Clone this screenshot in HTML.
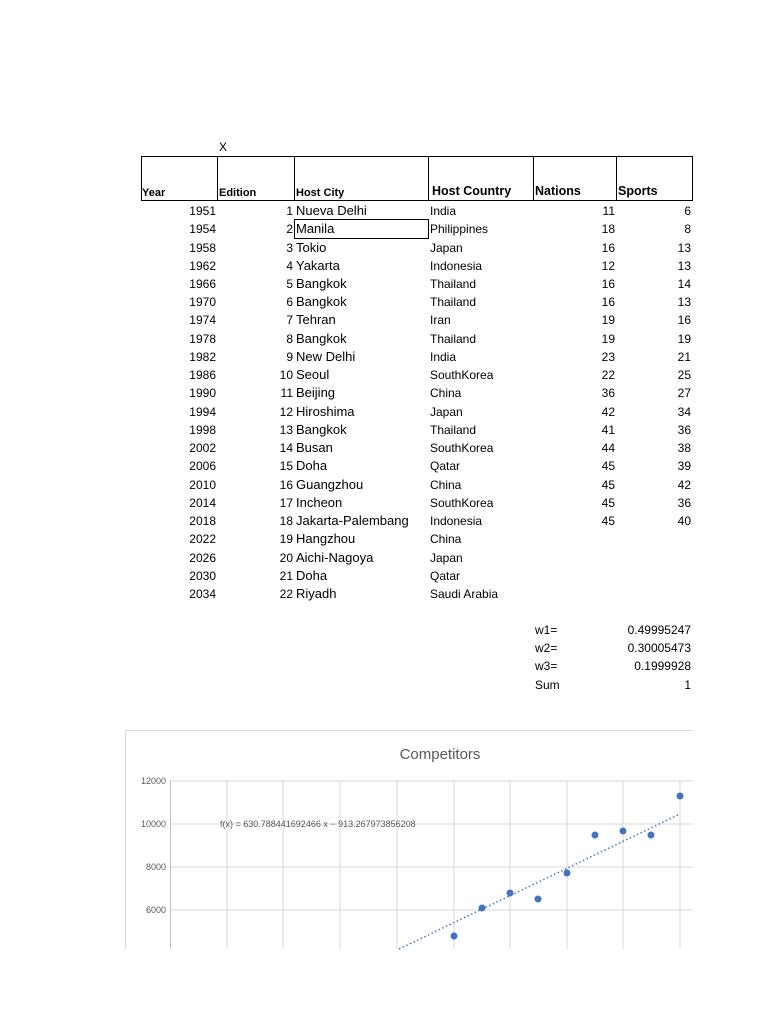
<!DOCTYPE html>
<html><head><meta charset="utf-8"><style>
body{margin:0;width:768px;height:1024px;background:#fff;position:relative;overflow:hidden;font-family:"Liberation Sans",Arial,sans-serif;color:#000}
.t{position:absolute;font-size:12px;line-height:16px;white-space:nowrap}
.r{text-align:right}
.c{font-size:13px}
.h{font-weight:bold;font-size:11px}
.ln{position:absolute;background:#000}
</style></head><body>
<div class="t" style="left:219px;top:139px">X</div>
<!-- header box -->
<div class="ln" style="left:141px;top:156px;width:552px;height:1px"></div>
<div class="ln" style="left:141px;top:200px;width:552px;height:1px"></div>
<div class="ln" style="left:141px;top:156px;width:1px;height:45px"></div>
<div class="ln" style="left:217px;top:156px;width:1px;height:45px"></div>
<div class="ln" style="left:294px;top:156px;width:1px;height:45px"></div>
<div class="ln" style="left:428px;top:156px;width:1px;height:45px"></div>
<div class="ln" style="left:533px;top:156px;width:1px;height:45px"></div>
<div class="ln" style="left:616px;top:156px;width:1px;height:45px"></div>
<div class="ln" style="left:692px;top:156px;width:1px;height:45px"></div>
<div class="t h" style="left:142px;top:185px">Year</div>
<div class="t h" style="left:219px;top:185px">Edition</div>
<div class="t h" style="left:296px;top:185px">Host City</div>
<div class="t h" style="left:432px;top:183px;font-size:12.5px">Host Country</div>
<div class="t h" style="left:535px;top:183px;font-size:12.5px">Nations</div>
<div class="t h" style="left:618px;top:183px;font-size:12.5px">Sports</div>
<!-- Manila box -->
<div style="position:absolute;left:294px;top:219px;width:133px;height:18px;border:1px solid #000"></div>
<div id="rows"></div>
<div class="t" style="left:535px;top:622px">w1=</div><div class="t r" style="left:560px;width:131px;top:622px">0.49995247</div>
<div class="t" style="left:535px;top:640px">w2=</div><div class="t r" style="left:560px;width:131px;top:640px">0.30005473</div>
<div class="t" style="left:535px;top:658px">w3=</div><div class="t r" style="left:560px;width:131px;top:658px">0.1999928</div>
<div class="t" style="left:535px;top:677px">Sum</div><div class="t r" style="left:560px;width:131px;top:677px">1</div>
<svg style="position:absolute;left:0;top:0" width="768" height="1024">
<line x1="125" y1="730.5" x2="693" y2="730.5" stroke="#d9d9d9"/>
<line x1="125.5" y1="730" x2="125.5" y2="950" stroke="#d9d9d9"/>
<text x="440" y="759" font-size="15" fill="#595959" text-anchor="middle" font-family="Liberation Sans">Competitors</text>
<g stroke="#d9d9d9" stroke-width="1">
<line x1="170" y1="781" x2="693" y2="781"/><line x1="170" y1="824" x2="693" y2="824"/><line x1="170" y1="867" x2="693" y2="867"/><line x1="170" y1="910" x2="693" y2="910"/>
<line x1="227" y1="781" x2="227" y2="949"/><line x1="283" y1="781" x2="283" y2="949"/><line x1="340" y1="781" x2="340" y2="949"/><line x1="397" y1="781" x2="397" y2="949"/><line x1="454" y1="781" x2="454" y2="949"/><line x1="510" y1="781" x2="510" y2="949"/><line x1="567" y1="781" x2="567" y2="949"/><line x1="623" y1="781" x2="623" y2="949"/><line x1="680" y1="781" x2="680" y2="949"/>
</g>
<line x1="170.5" y1="781" x2="170.5" y2="949" stroke="#bfbfbf"/>
<g font-size="9" fill="#595959" text-anchor="end" font-family="Liberation Sans">
<text x="166" y="784">12000</text><text x="166" y="827">10000</text><text x="166" y="870">8000</text><text x="166" y="913">6000</text>
</g>
<text x="220" y="827" font-size="9" fill="#595959" font-family="Liberation Sans">f(x) = 630.788441692466 x − 913.267973856208</text>
<line x1="399" y1="949" x2="680" y2="814" stroke="#4472c4" stroke-width="1.5" stroke-dasharray="1.5,2.5"/>
<g fill="#4472c4">
<circle cx="454" cy="936" r="3.5"/><circle cx="482" cy="908" r="3.5"/><circle cx="510" cy="893" r="3.5"/><circle cx="538" cy="899" r="3.5"/><circle cx="567" cy="873" r="3.5"/><circle cx="595" cy="835" r="3.5"/><circle cx="623" cy="831" r="3.5"/><circle cx="651" cy="835" r="3.5"/><circle cx="680" cy="796" r="3.5"/>
</g>
</svg>
<script>
var d=[[1951,1,"Nueva Delhi","India",11,6],[1954,2,"Manila","Philippines",18,8],[1958,3,"Tokio","Japan",16,13],[1962,4,"Yakarta","Indonesia",12,13],[1966,5,"Bangkok","Thailand",16,14],[1970,6,"Bangkok","Thailand",16,13],[1974,7,"Tehran","Iran",19,16],[1978,8,"Bangkok","Thailand",19,19],[1982,9,"New Delhi","India",23,21],[1986,10,"Seoul","SouthKorea",22,25],[1990,11,"Beijing","China",36,27],[1994,12,"Hiroshima","Japan",42,34],[1998,13,"Bangkok","Thailand",41,36],[2002,14,"Busan","SouthKorea",44,38],[2006,15,"Doha","Qatar",45,39],[2010,16,"Guangzhou","China",45,42],[2014,17,"Incheon","SouthKorea",45,36],[2018,18,"Jakarta-Palembang","Indonesia",45,40],[2022,19,"Hangzhou","China","",""],[2026,20,"Aichi-Nagoya","Japan","",""],[2030,21,"Doha","Qatar","",""],[2034,22,"Riyadh","Saudi Arabia","",""]];
var h="";d.forEach(function(r,i){var y=(203+i*18.24).toFixed(1);
h+='<div class="t r" style="left:142px;width:74px;top:'+y+'px">'+r[0]+'</div>'+
'<div class="t r" style="left:218px;width:75px;top:'+y+'px">'+r[1]+'</div>'+
'<div class="t c" style="left:296px;top:'+y+'px">'+r[2]+'</div>'+
'<div class="t" style="left:430px;top:'+y+'px">'+r[3]+'</div>'+
'<div class="t r" style="left:534px;width:81px;top:'+y+'px">'+r[4]+'</div>'+
'<div class="t r" style="left:617px;width:74px;top:'+y+'px">'+r[5]+'</div>';});
document.getElementById("rows").innerHTML=h;
</script>
</body></html>
